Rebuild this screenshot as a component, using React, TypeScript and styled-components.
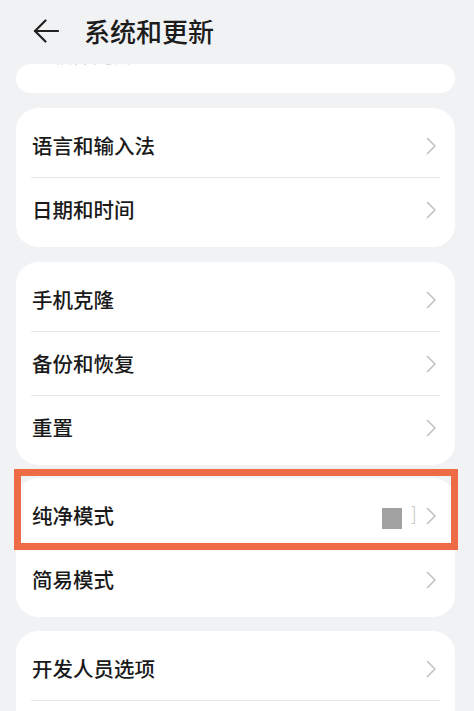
import React from "react";
import styled, { createGlobalStyle } from "styled-components";

const Global = createGlobalStyle`
  html, body { margin: 0; padding: 0; background: #f1f2f4; }
  body { font-family: "Noto Sans CJK SC", "Noto Sans", sans-serif; color: #1a1a1a; overflow: hidden; }
`;

const Page = styled.div`
  width: 474px;
  height: 711px;
  overflow: hidden;
  background: #f1f2f4;
`;

const Header = styled.header`
  height: 64px;
  display: flex;
  align-items: center;
  padding-left: 33px;
  gap: 25px;
  box-sizing: border-box;
  padding-bottom: 2px;
`;

const Title = styled.h1`
  margin: 0;
  font-size: 26px;
  font-weight: 500;
  color: #1c1c1c;
  line-height: 1;
`;

const List = styled.div`
  display: flex;
  flex-direction: column;
  padding: 0 19px 0 16px;
`;

const Card = styled.section<{ $clipped?: boolean; $gap?: number }>`
  position: relative;
  background: #ffffff;
  margin-top: ${(p) => (p.$gap ?? 15)}px;
  border-radius: ${(p) => (p.$clipped ? "15px" : "22px")};
  padding: ${(p) => (p.$clipped ? "0" : "6px 0")};
  height: ${(p) => (p.$clipped ? "29px" : "auto")};
  overflow: ${(p) => (p.$clipped ? "hidden" : "visible")};
`;

const Ghost = styled.div`
  margin: -21px 0 0 36px;
  font-size: 20px;
  color: #8a8a8a;
  line-height: 24px;
  opacity: 0.55;
`;

const Row = styled.div`
  height: 63px;
  display: flex;
  align-items: center;
  padding: 0 18px 0 16px;
`;

const Label = styled.span`
  flex: 1;
  font-size: 20.5px;
  font-weight: 500;
  color: #1a1a1a;
  line-height: 1;
`;

const Trail = styled.div`
  display: flex;
  align-items: center;
  gap: 8px;
`;

const Square = styled.div`
  width: 20px;
  height: 21px;
  background: #a2a2a2;
  margin-top: 6px;
`;

const Bracket = styled.span`
  font-size: 19px;
  font-family: "DejaVu Sans", sans-serif;
  font-weight: 300;
  color: #c4c4c4;
  line-height: 1;
  margin: -2px 1px 0 0;
`;

const Divider = styled.div`
  height: 1px;
  background: #e6e6e6;
  margin: 0 15px;
`;

const Highlight = styled.div`
  position: absolute;
  top: -9px;
  left: -2px;
  right: -3px;
  height: 81px;
  border: 7.5px solid #ee6c45;
  box-sizing: border-box;
  pointer-events: none;
`;

const Chevron = () => (
  <svg width="11" height="18" viewBox="0 0 11 18" fill="none">
    <polyline points="1.5,1.5 9,9 1.5,16.5" stroke="#c2c2c2" strokeWidth="1.6" strokeLinecap="round" strokeLinejoin="round" />
  </svg>
);

const BackArrow = () => (
  <svg width="26" height="24" viewBox="0 0 26 24" fill="none">
    <path d="M2 12 H25" stroke="#222" strokeWidth="2.2" strokeLinecap="round" />
    <path d="M12.5 1.5 L2 12 L12.5 22.5" stroke="#222" strokeWidth="2.2" strokeLinecap="round" strokeLinejoin="round" />
  </svg>
);

type ItemData = { label: string; extra?: boolean };

const Item: React.FC<ItemData> = ({ label, extra }) => (
  <Row>
    <Label>{label}</Label>
    <Trail>
      {extra && (
        <>
          <Square />
          <Bracket>]</Bracket>
        </>
      )}
      <Chevron />
    </Trail>
  </Row>
);

const Group: React.FC<{ items: ItemData[]; highlightFirst?: boolean; gap?: number }> = ({ items, highlightFirst, gap }) => (
  <Card $gap={gap}>
    {items.map((it, i) => (
      <React.Fragment key={it.label}>
        {i > 0 && <Divider />}
        <Item {...it} />
      </React.Fragment>
    ))}
    {highlightFirst && <Highlight />}
  </Card>
);

export default function App() {
  return (
    <Page>
      <Global />
      <Header>
        <BackArrow />
        <Title>系统和更新</Title>
      </Header>
      <List>
        <Card $clipped $gap={0}>
          <Ghost>软件更新</Ghost>
        </Card>
        <Group items={[{ label: "语言和输入法" }, { label: "日期和时间" }]} />
        <Group items={[{ label: "手机克隆" }, { label: "备份和恢复" }, { label: "重置" }]} />
        <Group gap={13} highlightFirst items={[{ label: "纯净模式", extra: true }, { label: "简易模式" }]} />
        <Group gap={14} items={[{ label: "开发人员选项" }, { label: "用户体验改进计划" }]} />
      </List>
    </Page>
  );
}
